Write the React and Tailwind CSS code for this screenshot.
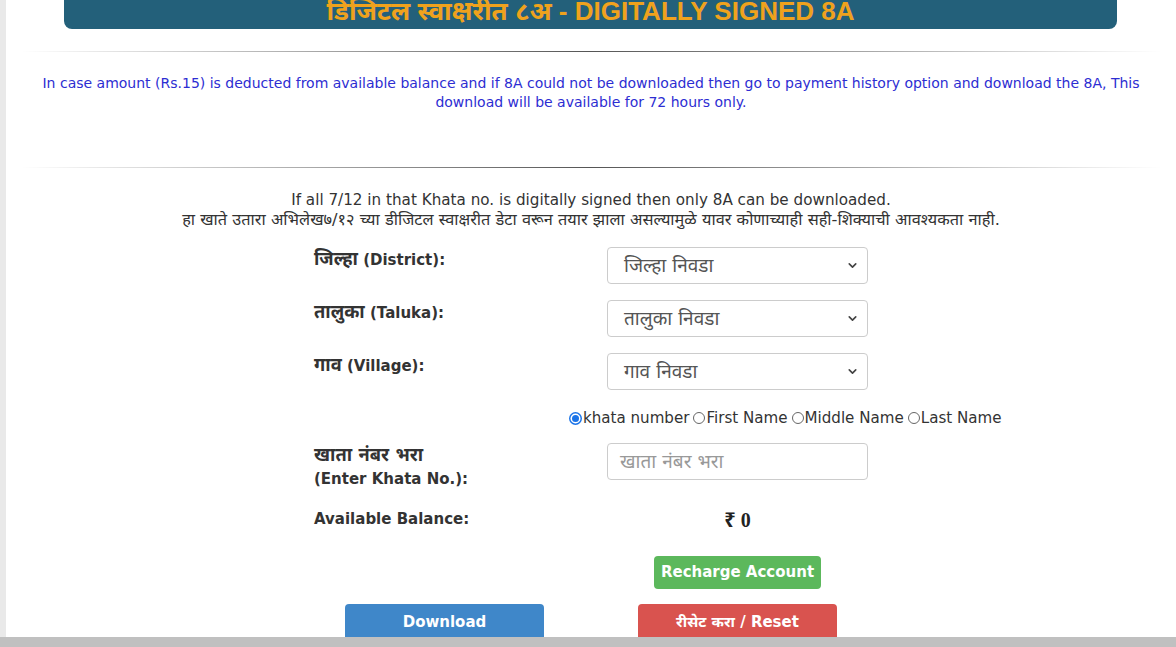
import { ChevronDown } from "lucide-react";

const body = { fontFamily: '"DejaVu Sans", Verdana, "Noto Sans", sans-serif' };

const Dev = ({ children, size = "text-[1.22em]" }) => (
  <span className={`${size} leading-none`}>{children}</span>
);

const Select = ({ text }) => (
  <div className="h-[37px] w-[261px] flex items-center justify-between rounded-[4px] border border-[#cccccc] bg-white pl-4 pr-2 text-[16px] text-[#555]">
    <Dev size="text-[19px]">{text}</Dev>
    <ChevronDown size={13} strokeWidth={3} className="text-[#444]" />
  </div>
);

const Radio = ({ checked, label }) => (
  <span className="flex items-center gap-[1px]">
    {checked ? (
      <span className="w-[13px] h-[13px] rounded-full bg-[#1a73e8] flex items-center justify-center">
        <span className="w-[7px] h-[7px] rounded-full bg-[#1a73e8] ring-[1.5px] ring-white" />
      </span>
    ) : (
      <span className="w-[12px] h-[12px] rounded-full border border-[#666] box-border" />
    )}
    <span>{label}</span>
  </span>
);

const Row = ({ label, children, className = "" }) => (
  <div className={`flex ${className}`}>
    <div className="w-[293px] pt-[2px] font-bold text-[15px] text-[#333] leading-[23px]">{label}</div>
    <div className="w-[261px]">{children}</div>
  </div>
);

export default function App() {
  return (
    <div className="h-[647px] flex flex-col bg-white overflow-hidden" style={body}>
      <div className="flex-1 flex overflow-hidden">
        <div className="w-[6px] bg-[#e9e9e9] shrink-0" />
        <div className="flex-1 flex flex-col items-center">
          <div className="shrink-0 w-[1053px] h-[29px] bg-[#23607a] rounded-b-[8px] flex items-center justify-center self-start ml-[58px]">
            <h1
              className="text-[26px] font-bold text-[#efa21d] leading-none mt-[-8px]"
              style={{ fontFamily: '"Liberation Sans", Arial, "Noto Sans", sans-serif' }}
            >
              डिजिटल स्वाक्षरीत ८अ - DIGITALLY SIGNED 8A
            </h1>
          </div>

          <div className="shrink-0 mt-[22px] h-[1px] w-[1140px] bg-gradient-to-r from-transparent via-[#555] to-transparent" />

          <p className="shrink-0 mt-[22px] w-[1110px] text-center text-[14px] leading-[19px] text-[#2d2dd2]">
            In case amount (Rs.15) is deducted from available balance and if 8A could not be downloaded then go to payment history option and download the 8A, This download will be available for 72 hours only.
          </p>

          <div className="shrink-0 mt-[55px] h-[1px] w-[1140px] bg-gradient-to-r from-transparent via-[#555] to-transparent" />

          <div className="shrink-0 mt-[22px] text-center text-[15.2px] leading-[20px] text-[#333]">
            <p>If all 7/12 in that Khata no. is digitally signed then only 8A can be downloaded.</p>
            <p>
              <Dev size="text-[1.075em]">
                हा खाते उतारा अभिलेख७/१२ च्या डीजिटल स्वाक्षरीत डेटा वरून तयार झाला असल्यामुळे यावर कोणाच्याही सही-शिक्याची आवश्यकता नाही.
              </Dev>
            </p>
          </div>

          <div className="shrink-0 w-[554px] mt-[17px] flex flex-col">
            <Row label={<><Dev>जिल्हा</Dev> (District):</>}>
              <Select text="जिल्हा निवडा" />
            </Row>
            <Row label={<><Dev>तालुका</Dev> (Taluka):</>} className="mt-[16px]">
              <Select text="तालुका निवडा" />
            </Row>
            <Row label={<><Dev>गाव</Dev> (Village):</>} className="mt-[16px]">
              <Select text="गाव निवडा" />
            </Row>

            <div className="mt-[19px] ml-[255px] flex gap-[4px] text-[15.1px] text-[#333] leading-[18px] whitespace-nowrap">
              <Radio checked label="khata number" />
              <Radio label="First Name" />
              <Radio label="Middle Name" />
              <Radio label="Last Name" />
            </div>

            <Row
              label={
                <>
                  <Dev>खाता नंबर भरा</Dev>
                  <br />
                  (Enter Khata No.):
                </>
              }
              className="mt-[16px]"
            >
              <div className="h-[37px] w-[261px] flex items-center rounded-[4px] border border-[#cccccc] pl-3 text-[#999]">
                <Dev size="text-[19px]">खाता नंबर भरा</Dev>
              </div>
            </Row>

            <Row label="Available Balance:" className="mt-[15px]">
              <div
                className="text-center font-bold text-[20px] text-[#222] leading-[26px] pt-[1px]"
                style={{ fontFamily: '"Liberation Serif", "Noto Sans", serif' }}
              >
                ₹ 0
              </div>
            </Row>

            <div className="mt-[23px] ml-[293px] w-[261px] flex justify-center">
              <button className="h-[33px] w-[167px] rounded-[4px] bg-[#5cb85c] text-white font-bold text-[15px]">
                Recharge Account
              </button>
            </div>

            <div className="mt-[15px] flex">
              <button className="ml-[31px] h-[36px] w-[199px] rounded-[4px] bg-[#3f87c9] text-white font-bold text-[15px]">
                Download
              </button>
              <button className="ml-[94px] h-[36px] w-[199px] rounded-[4px] bg-[#d9534f] text-white font-bold text-[15px]">
                रीसेट करा / Reset
              </button>
            </div>
          </div>
        </div>
      </div>
      <div className="h-[10px] bg-[#c0c0c0] shrink-0" />
    </div>
  );
}
